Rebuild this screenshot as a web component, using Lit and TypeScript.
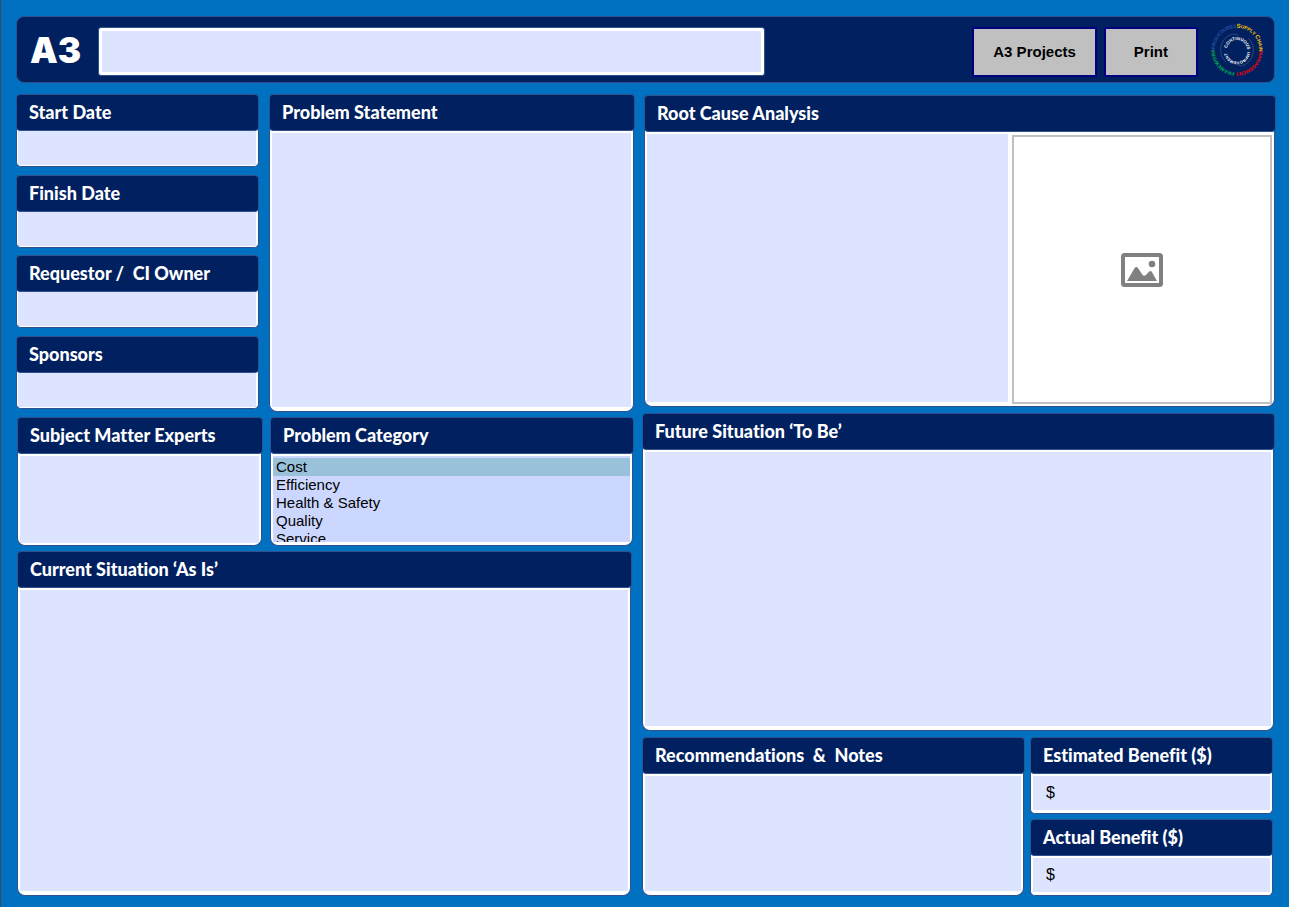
import { LitElement, html, css } from "lit";
import { customElement, property, state } from "lit/decorators.js";

const CATEGORIES = ["Cost", "Efficiency", "Health & Safety", "Quality", "Service"];

@customElement("form-panel")
export class FormPanel extends LitElement {
  static styles = css`
    :host {
      display: flex;
      flex-direction: column;
      min-width: 0;
    }
    .title {
      box-sizing: border-box;
      position: relative;
      z-index: 1;
      height: 37px;
      padding: 0 12px;
      border: 1px solid #2f528f;
      border-radius: 4px;
      background: #002060;
      color: #fff;
      font: 900 18px/35px Lato, sans-serif;
      font-variant-ligatures: none;
      white-space: pre;
    }
    .body {
      box-sizing: border-box;
      flex: 1;
      display: flex;
      min-height: 37px;
      margin-top: -1px;
      padding: 1px 2px 1px 1px;
      border: 1px solid #2f528f;
      border-top: 0;
      border-radius: 0 0 5px 5px;
      background: #fff;
    }
    :host([roomy]) .body {
      margin-right: 1px;
      padding: 3px 2px 4px 2px;
      border-radius: 0 0 8px 8px;
    }
    :host([compact]) .body {
      padding-bottom: 2px;
    }
    :host([money]) .body {
      padding: 3px 2px 3px 2px;
    }
  `;

  @property() heading = "";

  render() {
    return html`
      <div class="title">${this.heading}</div>
      <div class="body"><slot></slot></div>
    `;
  }
}

@customElement("app-logo")
export class AppLogo extends LitElement {
  static styles = css`
    :host {
      display: block;
      flex: none;
      width: 56px;
      height: 56px;
    }
    svg {
      display: block;
      width: 100%;
      height: 100%;
      overflow: visible;
    }
    text {
      font: 700 48px "Liberation Sans", sans-serif;
    }
    .cap {
      font-size: 60px;
    }
    .yellow {
      fill: #ffc000;
    }
    .red {
      fill: #ff0000;
    }
    .green {
      font-size: 50px;
      fill: #00b050;
    }
    .blue {
      fill: #2a52a8;
    }
    .upper {
      font-size: 44px;
      fill: #fff;
    }
    .lower {
      font-size: 40px;
      fill: #fff;
    }
  `;

  render() {
    return html`
      <svg viewBox="0 0 560 560" role="img" aria-label="Continuous Improvement">
        <defs>
          <path id="ne" d="M274 58A222 222 0 0 1 502 280V420" />
          <path id="se" d="M502 290A222 222 0 0 1 280 502H100" />
          <path id="sw" d="M258 502A222 222 0 0 1 58 280V100" />
          <path id="nw" d="M58 274A222 222 0 0 1 280 58H400" />
          <path id="north" d="M180 262A102 102 0 0 1 382 280V400" />
          <path id="south" d="M382 300A102 102 0 0 1 178 286V100" />
        </defs>
        <text class="yellow"><textPath href="#ne"><tspan class="cap">S</tspan>UPPLY <tspan class="cap">C</tspan>HAIN</textPath></text>
        <text class="red"><textPath href="#se">MANAGEMENT</textPath></text>
        <text class="green"><textPath href="#sw">FRAMEWORK</textPath></text>
        <text class="blue"><textPath href="#nw">PROCEDURES</textPath></text>
        <text class="upper"><textPath href="#north">CONTINUOUS</textPath></text>
        <text class="lower"><textPath href="#south">IMPROVEMENT</textPath></text>
        <path
          d="M170 400A165 165 0 0 1 235 120L290 130M390 160A165 165 0 0 1 325 440L290 430"
          fill="none"
          stroke="#3c5084"
          stroke-width="8"
        />
      </svg>
    `;
  }
}

@customElement("app-root")
export class AppRoot extends LitElement {
  static styles = css`
    :host {
      display: block;
    }
    .page {
      box-sizing: border-box;
      min-height: 100vh;
      display: flex;
      flex-direction: column;
      gap: 11px;
      padding: 16px 13px 11px 15px;
      border-left: 1px solid #404a55;
      background: #0070c0;
      font-family: "Liberation Sans", Arial, sans-serif;
    }
    .bar {
      box-sizing: border-box;
      display: flex;
      align-items: center;
      height: 67px;
      margin-right: 1px;
      padding: 0 9px 0 13px;
      border: 1px solid #2f528f;
      border-radius: 8px;
      background: #002060;
    }
    .brand {
      margin: 0;
      width: 68px;
      color: #fff;
      font: 900 35px/48px Inter, sans-serif;
    }
    .project {
      box-sizing: border-box;
      flex: 0 1 667px;
      min-width: 0;
      height: 49px;
      margin-top: 4px;
      padding: 0 8px;
      border: 1px solid #2f528f;
      border-radius: 3px;
      box-shadow: inset 0 0 0 3px #fff;
      background: #dde4ff;
      font: 20px "Liberation Sans", sans-serif;
    }
    .actions {
      display: flex;
      gap: 7px;
      margin: 4px 11px 0 auto;
    }
    .action {
      height: 50px;
      padding: 0 19px;
      border: 2px solid #000080;
      background: #c0c0c0;
      color: #000;
      font: 700 15px "Liberation Sans", sans-serif;
    }
    .print {
      padding: 0 28px;
    }
    .board {
      flex: 1;
      display: grid;
      grid-template-columns: 619fr 634fr;
      gap: 7px;
    }
    .left {
      display: grid;
      grid-template-rows: 318fr 129fr 345fr;
      gap: 5px;
      min-width: 0;
    }
    .right {
      display: grid;
      grid-template-rows: 312fr 318fr 159fr;
      gap: 6px;
      min-width: 0;
      padding-top: 1px;
    }
    .top {
      display: grid;
      grid-template-columns: 243fr 366fr;
      gap: 10px;
    }
    .facts {
      display: flex;
      flex-direction: column;
      justify-content: space-between;
      padding-bottom: 3px;
    }
    .middle {
      display: grid;
      grid-template-columns: 246fr 364fr;
      gap: 7px;
      margin: 0 1px;
    }
    .asis {
      margin: 0 3px 0 1px;
    }
    .cause {
      margin-left: 2px;
    }
    .future {
      margin-right: 1px;
    }
    .bottom {
      display: grid;
      grid-template-columns: 383fr 243fr;
      gap: 5px;
      margin-right: 3px;
    }
    .benefits {
      display: grid;
      gap: 5px;
    }
    .field,
    .area,
    .list {
      box-sizing: border-box;
      flex: 1;
      width: 100%;
      min-width: 0;
      margin: 0;
      padding: 2px 4px;
      border: 0;
      border-radius: 0;
      outline: 0;
      background: #dde4ff;
      color: #000;
      font: 15px/18px "Liberation Sans", sans-serif;
      resize: none;
    }
    .money {
      padding: 2px 13px;
      font-size: 16px;
    }
    .list {
      height: 86px;
      padding: 2px 0 0;
      overflow: hidden;
      background: #ccd7ff;
    }
    .option {
      box-sizing: border-box;
      height: 18px;
      min-height: 18px;
      padding: 0 3px;
      line-height: 18px;
    }
    .option:checked {
      background: #9ac1da linear-gradient(#9ac1da, #9ac1da);
      color: #000;
    }
    .picture {
      flex: none;
      width: 260px;
      margin: 1px 0 -2px 4px;
      padding: 0;
      border: 2px solid #c0c0c0;
      background: #fff;
    }
    .image {
      display: block;
      width: 42px;
      height: 34px;
      margin: auto;
    }
  `;

  @state() private category = CATEGORIES[0];

  private pick(e: Event) {
    this.category = (e.target as HTMLSelectElement).value;
  }

  private fact(heading: string) {
    return html`<form-panel heading=${heading}>
      <input class="field" aria-label=${heading} />
    </form-panel>`;
  }

  render() {
    return html`
      <main class="page">
        <header class="bar">
          <h1 class="brand">A3</h1>
          <input class="project" aria-label="A3 project title" />
          <div class="actions">
            <button class="action">A3 Projects</button>
            <button class="action print" @click=${() => window.print()}>Print</button>
          </div>
          <app-logo></app-logo>
        </header>

        <div class="board">
          <div class="left">
            <div class="top">
              <div class="facts">
                ${["Start Date", "Finish Date", "Requestor /  CI Owner", "Sponsors"].map((h) => this.fact(h))}
              </div>
              <form-panel roomy heading="Problem Statement">
                <textarea class="area" aria-label="Problem Statement"></textarea>
              </form-panel>
            </div>
            <div class="middle">
              <form-panel roomy compact heading="Subject Matter Experts">
                <textarea class="area" aria-label="Subject Matter Experts"></textarea>
              </form-panel>
              <form-panel roomy compact heading="Problem Category">
                <select class="list" size="5" aria-label="Problem Category" @change=${this.pick}>
                  ${CATEGORIES.map(
                    (c) => html`<option class="option" ?selected=${c === this.category}>${c}</option>`
                  )}
                </select>
              </form-panel>
            </div>
            <form-panel roomy class="asis" heading="Current Situation ‘As Is’">
              <textarea class="area" aria-label="Current Situation As Is"></textarea>
            </form-panel>
          </div>

          <div class="right">
            <form-panel roomy class="cause" heading="Root Cause Analysis">
              <textarea class="area" aria-label="Root Cause Analysis"></textarea>
              <button class="picture" aria-label="Add picture">
                <svg class="image" viewBox="0 0 42 34">
                  <rect x="2" y="2" width="38" height="30" rx="1.5" fill="none" stroke="#808080" stroke-width="4" />
                  <circle cx="31" cy="11" r="3.3" fill="#808080" />
                  <path
                    d="M6 28L13.8 14.8Q15.3 13 16.8 14.8L22 22.5H24.5L28.2 18.4Q29.5 17.3 30.6 18.6L36 28Z"
                    fill="#808080"
                  />
                </svg>
              </button>
            </form-panel>
            <form-panel roomy class="future" heading="Future Situation ‘To Be’">
              <textarea class="area" aria-label="Future Situation To Be"></textarea>
            </form-panel>
            <div class="bottom">
              <form-panel roomy heading="Recommendations  &  Notes">
                <textarea class="area" aria-label="Recommendations and Notes"></textarea>
              </form-panel>
              <div class="benefits">
                <form-panel money heading="Estimated Benefit ($)">
                  <input class="field money" aria-label="Estimated Benefit" value="$" />
                </form-panel>
                <form-panel money heading="Actual Benefit ($)">
                  <input class="field money" aria-label="Actual Benefit" value="$" />
                </form-panel>
              </div>
            </div>
          </div>
        </div>
      </main>
    `;
  }
}
